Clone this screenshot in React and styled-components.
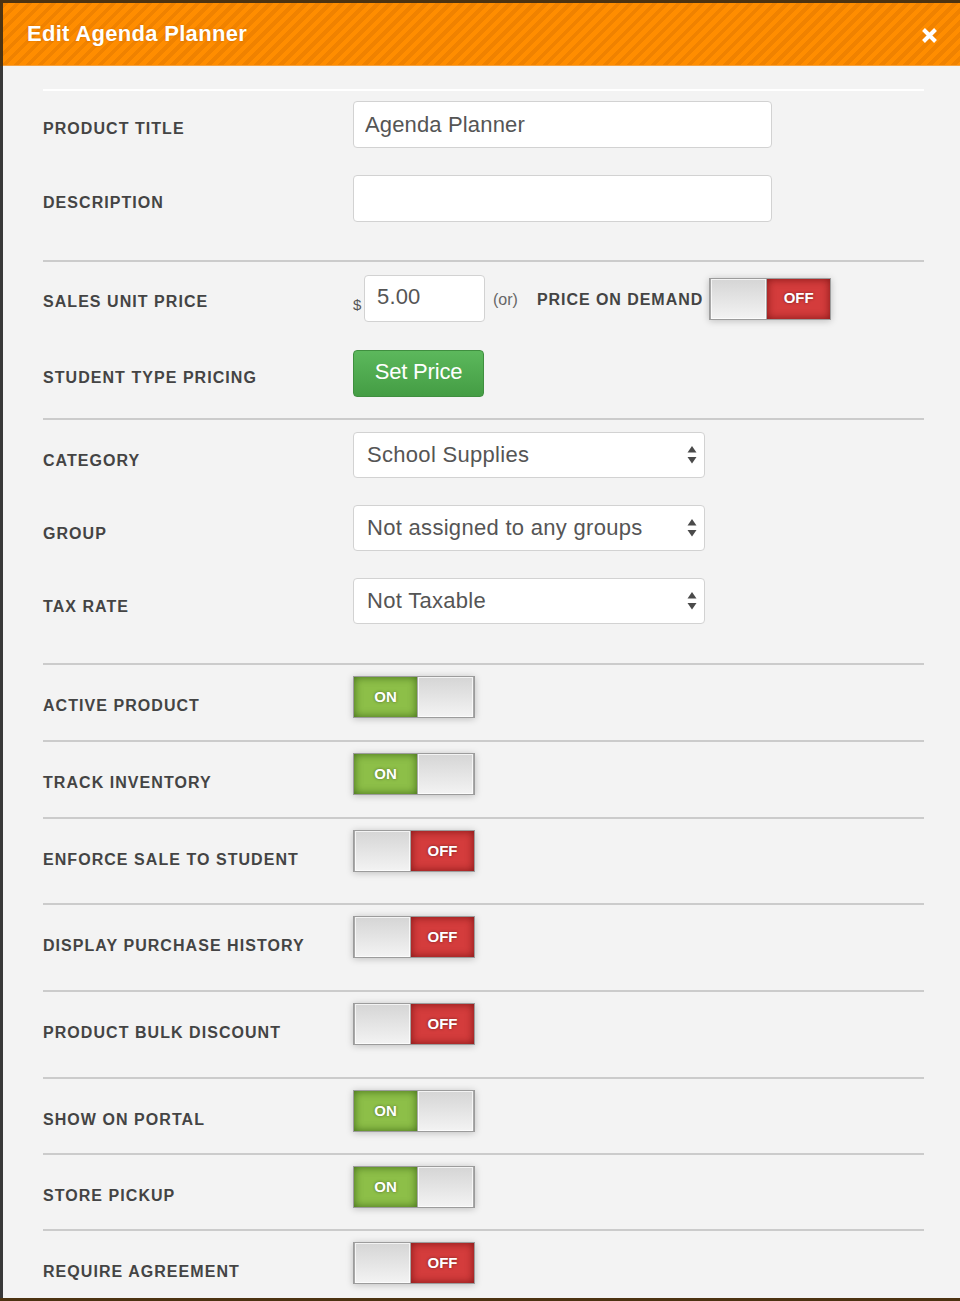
import { createGlobalStyle, styled } from 'styled-components';

const GlobalStyle = createGlobalStyle`
  html, body {
    margin: 0;
    padding: 0;
  }
  body {
    background: linear-gradient(#4c3311 0 66px, #383838 66px);
    font-family: "Liberation Sans", Arial, sans-serif;
  }
`;

const sections = [
  { label: 'ACTIVE PRODUCT', on: true, pb: 22 },
  { label: 'TRACK INVENTORY', on: true, pb: 22 },
  { label: 'ENFORCE SALE TO STUDENT', on: false, pb: 31 },
  { label: 'DISPLAY PURCHASE HISTORY', on: false, pb: 32 },
  { label: 'PRODUCT BULK DISCOUNT', on: false, pb: 32 },
  { label: 'SHOW ON PORTAL', on: true, pb: 21 },
  { label: 'STORE PICKUP', on: true, pb: 21 },
  { label: 'REQUIRE AGREEMENT', on: false, pb: 21 },
];

const Toggle = ({ on }) => (
  <Switch $on={on}>
    <SwitchState $on={on}>{on ? 'ON' : 'OFF'}</SwitchState>
    <Knob />
  </Switch>
);

const SelectArrows = () => (
  <svg width='10' height='18' viewBox='0 0 10 18'>
    <polygon points='5,0 9.5,6.5 0.5,6.5' fill='#4a4a4a' />
    <polygon points='0.5,11 9.5,11 5,17.5' fill='#4a4a4a' />
  </svg>
);

const CloseIcon = () => (
  <svg width='17' height='17' viewBox='0 0 17 17'>
    <path d='M2.5 2.5 L14.5 14.5 M14.5 2.5 L2.5 14.5' stroke='#fff' strokeWidth='4' />
  </svg>
);

const App = () => {
  return (
    <>
      <GlobalStyle />
      <Modal>
        <Header>
          <Title>Edit Agenda Planner</Title>
          <CloseButton>
            <CloseIcon />
          </CloseButton>
        </Header>
        <Body>
          <Section $first $pt={10} $pb={38} $gap={27}>
            <Row>
              <Label>PRODUCT TITLE</Label>
              <TextInput readOnly defaultValue='Agenda Planner' />
            </Row>
            <Row>
              <Label>DESCRIPTION</Label>
              <TextInput readOnly defaultValue='' />
            </Row>
          </Section>

          <Section $pt={13} $pb={21} $gap={28}>
            <Row>
              <Label $offset={6}>SALES UNIT PRICE</Label>
              <Inline>
                <Dollar>$</Dollar>
                <PriceInput readOnly defaultValue='5.00' />
                <OrText>(or)</OrText>
                <InlineLabel>PRICE ON DEMAND</InlineLabel>
                <Toggle on={false} />
              </Inline>
            </Row>
            <Row>
              <Label>STUDENT TYPE PRICING</Label>
              <Inline>
                <GreenButton>Set Price</GreenButton>
              </Inline>
            </Row>
          </Section>

          <Section $pt={12} $pb={39} $gap={27}>
            {['School Supplies', 'Not assigned to any groups', 'Not Taxable'].map(
              (value, i) => (
                <Row key={value}>
                  <Label $offset={11}>{['CATEGORY', 'GROUP', 'TAX RATE'][i]}</Label>
                  <SelectBox>
                    <span>{value}</span>
                    <SelectArrows />
                  </SelectBox>
                </Row>
              )
            )}
          </Section>

          {sections.map((s) => (
            <Section key={s.label} $pt={11} $pb={s.pb} $gap={0}>
              <Row>
                <Label $offset={17}>{s.label}</Label>
                <Inline>
                  <Toggle on={s.on} />
                </Inline>
              </Row>
            </Section>
          ))}
        </Body>
      </Modal>
    </>
  );
};

export default App;

const Modal = styled.div`
  margin: 3px 0 0 3px;
  height: 1295px;
  background: #f3f3f3;
  overflow: hidden;
`;

const Header = styled.div`
  height: 63px;
  box-sizing: border-box;
  display: flex;
  align-items: center;
  justify-content: space-between;
  padding: 0 22px 0 24px;
  background-color: #ff8d00;
  background-image: repeating-linear-gradient(
    135deg,
    rgba(205, 105, 0, 0.3) 0 4px,
    transparent 4px 8.5px
  );
  border-bottom: 1px solid #f7a23e;
`;

const Title = styled.h1`
  margin: 0;
  color: #fff;
  font-size: 22px;
  font-weight: bold;
  letter-spacing: 0.3px;
  text-shadow: 0 0 2px rgba(120, 60, 0, 0.35);
`;

const CloseButton = styled.span`
  display: flex;
  margin-top: 2px;
`;

const Body = styled.div`
  padding: 23px 36px 0 40px;
`;

const Section = styled.div`
  display: flex;
  flex-direction: column;
  gap: ${(p) => p.$gap}px;
  padding: ${(p) => p.$pt}px 0 ${(p) => p.$pb}px;
  border-top: 2px solid ${(p) => (p.$first ? '#ffffff' : '#cbcbcb')};
`;

const Row = styled.div`
  display: grid;
  grid-template-columns: 310px 1fr;
  align-items: center;
`;

const Label = styled.div`
  padding-top: ${(p) => p.$offset ?? 9}px;
  font-size: 16px;
  font-weight: bold;
  letter-spacing: 1.05px;
  color: #444;
`;

const Inline = styled.div`
  display: flex;
  align-items: center;
`;

const TextInput = styled.input`
  box-sizing: border-box;
  width: 419px;
  height: 47px;
  padding: 0 11px;
  border: 1px solid #d2d2d2;
  border-radius: 4px;
  background: #fff;
  font: 22px "Liberation Sans", Arial, sans-serif;
  letter-spacing: 0.15px;
  color: #555;
  outline: none;
`;

const Dollar = styled.span`
  padding-top: 12px;
  width: 11px;
  font-size: 15px;
  color: #555;
`;

const PriceInput = styled(TextInput)`
  width: 121px;
  height: 47px;
  padding: 0 12px 4px;
`;

const OrText = styled.span`
  margin: 2px 0 0 8px;
  font-size: 16px;
  color: #666;
`;

const InlineLabel = styled.span`
  margin: 2px 6px 0 19px;
  font-size: 16px;
  font-weight: bold;
  letter-spacing: 0.95px;
  color: #444;
`;

const Switch = styled.div`
  display: flex;
  flex-direction: ${(p) => (p.$on ? 'row' : 'row-reverse')};
  box-sizing: border-box;
  width: 122px;
  height: 42px;
  border: 1px solid #9c9c9c;
  box-shadow: 0 1px 7px rgba(0, 0, 0, 0.22);
`;

const SwitchState = styled.span`
  display: flex;
  align-items: center;
  justify-content: center;
  width: 63px;
  padding-bottom: 2px;
  box-sizing: border-box;
  background: ${(p) => (p.$on ? '#8dbf48' : '#d43c3c')};
  box-shadow: inset 0 0 9px
    ${(p) => (p.$on ? 'rgba(40, 80, 10, 0.75)' : 'rgba(100, 10, 10, 0.75)')};
  color: #fff;
  font-size: 15px;
  font-weight: bold;
  text-shadow: 0 0 3px rgba(0, 0, 0, 0.45);
`;

const Knob = styled.span`
  flex: 1;
  background: linear-gradient(#d5d5d5, #f3f3f3);
  box-shadow: inset 0 0 0 1px rgba(255, 255, 255, 0.7);
  border-left: 1px solid #a8a8a8;
  border-right: 1px solid #a8a8a8;
`;

const GreenButton = styled.button`
  box-sizing: border-box;
  width: 131px;
  height: 47px;
  padding: 0 0 3px;
  border: 1px solid #3f8f3f;
  border-radius: 4px;
  background: linear-gradient(#5cb85c, #449d44);
  color: #fff;
  font: 22px "Liberation Sans", Arial, sans-serif;
  letter-spacing: -0.2px;
`;

const SelectBox = styled.div`
  box-sizing: border-box;
  width: 352px;
  height: 46px;
  display: flex;
  align-items: center;
  justify-content: space-between;
  padding: 0 7px 0 13px;
  border: 1px solid #d2d2d2;
  border-radius: 4px;
  background: #fff;
  font-size: 22px;
  letter-spacing: 0.3px;
  color: #555;
`;
